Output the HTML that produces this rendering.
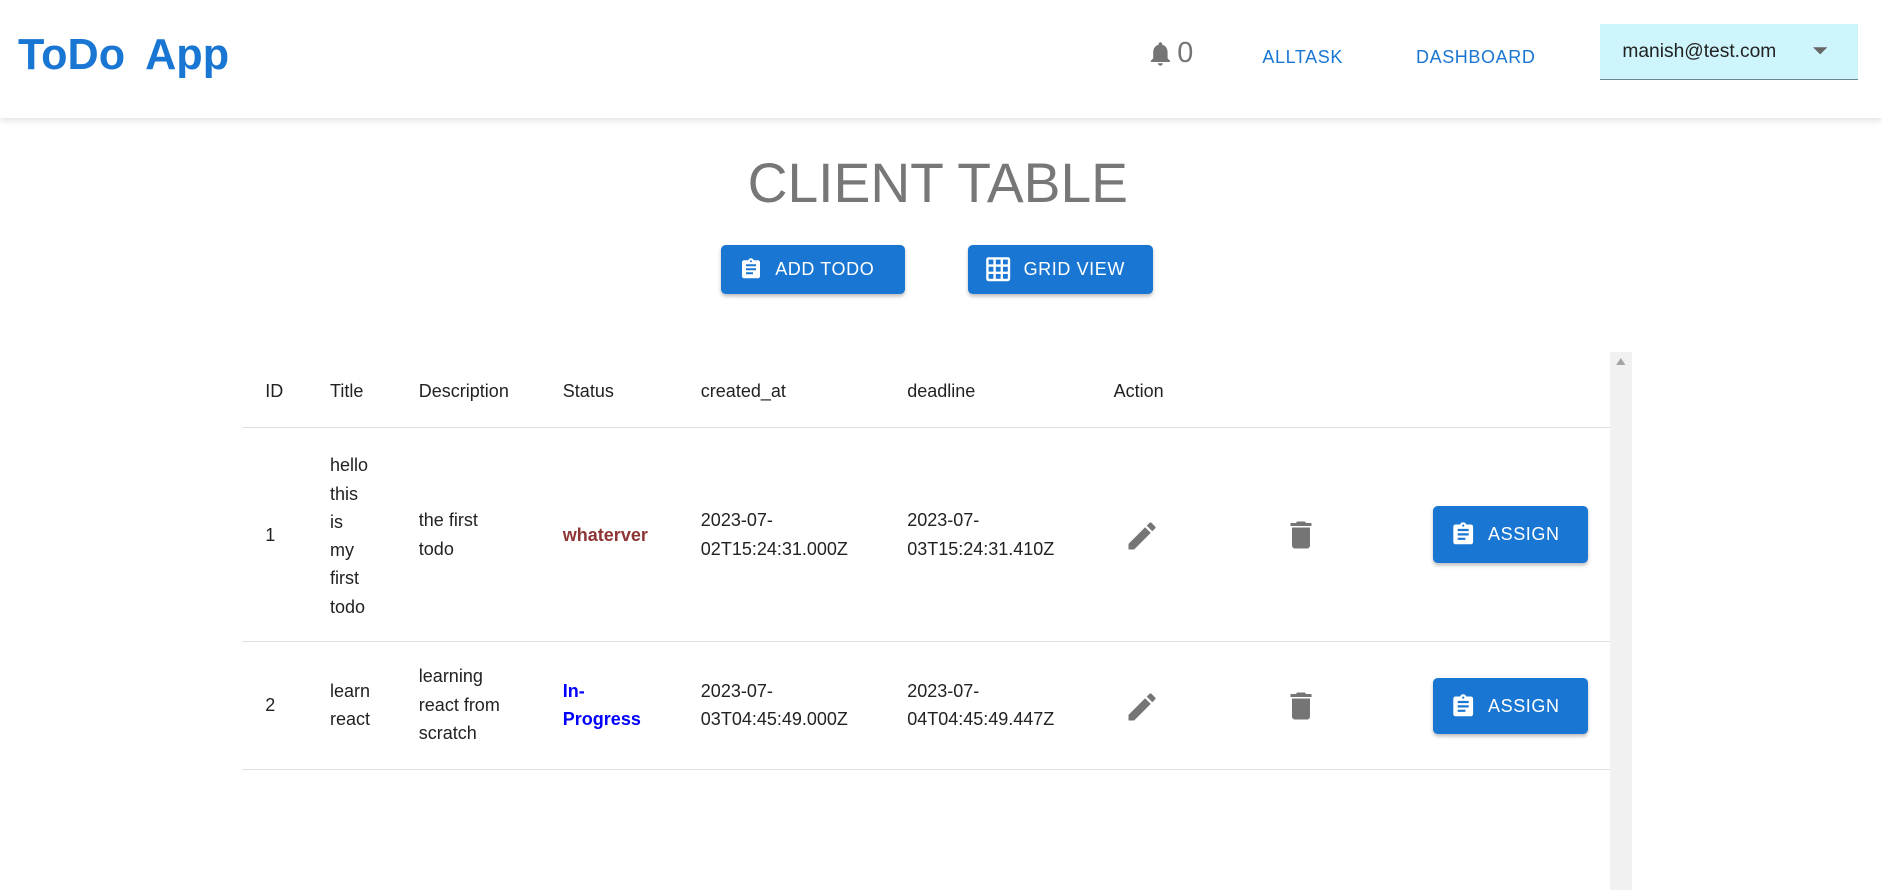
<!DOCTYPE html>
<html><head><meta charset="utf-8">
<style>
html,body{margin:0;padding:0;width:1882px;height:890px;overflow:hidden;background:#fff;}
#w{zoom:1.2;width:1568px;height:742px;position:relative;font-family:"Liberation Sans",sans-serif;}
.a{position:absolute;}
header{position:absolute;left:0;top:0;width:1568px;height:98px;background:#fff;box-shadow:0 2px 6px rgba(0,0,0,0.12);}
.logo{left:15px;top:26px;font-size:36px;font-weight:bold;color:#1976d2;letter-spacing:0px;word-spacing:8px;}
.nav{font-size:15px;color:#1976d2;letter-spacing:0.5px;top:39px;}
.user{left:1333px;top:20px;width:215px;height:46px;background:#cdf5fb;border-bottom:1px solid #6a8a8f;font-size:16px;color:#222;}
h1{position:absolute;margin:0;left:0;width:1563px;text-align:center;top:126px;font-size:46px;font-weight:normal;color:#777;}
.btn{background:#1976d2;color:#fff;border-radius:4px;box-shadow:0 2px 3px rgba(0,0,0,0.25);font-size:15px;letter-spacing:0.5px;display:flex;align-items:center;}
.btn svg{margin-right:10px;}
.t{font-size:15px;color:#222;line-height:23.6px;}
.line{position:absolute;left:202px;width:1140px;height:1px;background:#e0e0e0;}
</style></head><body><div id="w">
<header>
<div class="a logo">ToDo App</div>
<svg class="a" style="left:955px;top:32px" width="24" height="26" viewBox="0 0 24 24"><path fill="#757575" d="M12 22c1.1 0 2-.9 2-2h-4c0 1.1.9 2 2 2zm6-6v-5c0-3.070-1.63-5.64-4.5-6.32V4c0-.83-.67-1.5-1.5-1.5s-1.5.67-1.5 1.5v.68C7.640 5.36 6 7.92 6 11v5l-2 2v1h16v-1l-2-2z"/></svg>
<div class="a" style="left:981px;top:31px;font-size:24px;color:#757575">0</div>
<div class="a nav" style="left:1052px">ALLTASK</div>
<div class="a nav" style="left:1180px">DASHBOARD</div>
<div class="a user"><span class="a" style="left:19px;top:14px">manish@test.com</span><svg class="a" style="left:178px;top:18px" width="12" height="8" viewBox="0 0 10 5"><path fill="#666" d="M0 0l5 5 5-5z"/></svg></div>
</header>
<h1>CLIENT TABLE</h1>
<div class="a btn" style="left:601px;top:204px;width:153px;height:41px;"><svg style="margin-left:15px" width="20" height="22" viewBox="0 0 24 24"><path fill="#fff" d="M19 3h-4.18C14.4 1.84 13.3 1 12 1s-2.4.84-2.82 2H5c-1.1 0-2 .9-2 2v14c0 1.1.9 2 2 2h14c1.1 0 2-.9 2-2V5c0-1.1-.9-2-2-2zm-7 0c.55 0 1 .45 1 1s-.45 1-1 1-1-.45-1-1 .45-1 1-1zm2 14H7v-2h7v2zm3-4H7v-2h10v2zm0-4H7V7h10v2z"/></svg>ADD TODO</div>
<div class="a btn" style="left:807px;top:204px;width:154px;height:41px;"><svg style="margin-left:14px" width="22" height="22" viewBox="0 0 22 22"><g fill="none" stroke="#fff" stroke-width="2"><rect x="2" y="2" width="18" height="18" rx="1"/><path d="M8 2v18M14 2v18M2 8h18M2 14h18"/></g></svg>GRID VIEW</div>

<div class="a" style="left:1342px;top:293px;width:18px;height:449px;background:#f1f1f1"></div>
<svg class="a" style="left:1347px;top:298px" width="8" height="6" viewBox="0 0 8 6"><path fill="#a3a3a3" d="M0 6L4 0 8 6z"/></svg>

<div class="a t" style="left:221px;top:314px">ID</div>
<div class="a t" style="left:275px;top:314px">Title</div>
<div class="a t" style="left:349px;top:314px">Description</div>
<div class="a t" style="left:469px;top:314px">Status</div>
<div class="a t" style="left:584px;top:314px">created_at</div>
<div class="a t" style="left:756px;top:314px">deadline</div>
<div class="a t" style="left:928px;top:314px">Action</div>
<div class="line" style="top:356px"></div>

<div class="a t" style="left:221px;top:434px">1</div>
<div class="a t" style="left:275px;top:376px">hello<br>this<br>is<br>my<br>first<br>todo</div>
<div class="a t" style="left:349px;top:422px">the first<br>todo</div>
<div class="a t" style="left:469px;top:434px;font-weight:bold;color:#8e3535">whaterver</div>
<div class="a t" style="left:584px;top:422px">2023-07-<br>02T15:24:31.000Z</div>
<div class="a t" style="left:756px;top:422px">2023-07-<br>03T15:24:31.410Z</div>
<div class="line" style="top:534px"></div>

<div class="a t" style="left:221px;top:576px">2</div>
<div class="a t" style="left:275px;top:564px">learn<br>react</div>
<div class="a t" style="left:349px;top:552px">learning<br>react from<br>scratch</div>
<div class="a t" style="left:469px;top:564px;font-weight:bold;color:#0000ff">In-<br>Progress</div>
<div class="a t" style="left:584px;top:564px">2023-07-<br>03T04:45:49.000Z</div>
<div class="a t" style="left:756px;top:564px">2023-07-<br>04T04:45:49.447Z</div>
<div class="line" style="top:641px"></div>

<svg class="a" style="left:937px;top:432px" width="30" height="30" viewBox="0 0 24 24"><path fill="#757575" d="M3 17.25V21h3.75L17.81 9.94l-3.75-3.75L3 17.250zM20.71 7.04a1 1 0 000-1.41l-2.34-2.34a1 1 0 00-1.41 0l-1.83 1.83 3.75 3.75 1.83-1.83z"/></svg>
<svg class="a" style="left:1069px;top:431px" width="30" height="30" viewBox="0 0 24 24"><path fill="#757575" d="M6 19c0 1.1.9 2 2 2h8c1.1 0 2-.9 2-2V7H6v12zM19 4h-3.5l-1-1h-5l-1 1H5v2h14V4z"/></svg>
<svg class="a" style="left:937px;top:574px" width="30" height="30" viewBox="0 0 24 24"><path fill="#757575" d="M3 17.25V21h3.75L17.81 9.94l-3.75-3.75L3 17.25zM20.71 7.04a1 1 0 000-1.41l-2.34-2.34a1 1 0 00-1.41 0l-1.83 1.83 3.75 3.75 1.83-1.83z"/></svg>
<svg class="a" style="left:1069px;top:573px" width="30" height="30" viewBox="0 0 24 24"><path fill="#757575" d="M6 19c0 1.1.9 2 2 2h8c1.1 0 2-.9 2-2V7H6v12zM19 4h-3.5l-1-1h-5l-1 1H5v2h14V4z"/></svg>

<div class="a btn" style="left:1194px;top:422px;width:129px;height:47px;"><svg style="margin-left:14px" width="22" height="24" viewBox="0 0 24 24"><path fill="#fff" d="M19 3h-4.18C14.4 1.84 13.3 1 12 1s-2.4.84-2.82 2H5c-1.1 0-2 .9-2 2v14c0 1.1.9 2 2 2h14c1.1 0 2-.9 2-2V5c0-1.1-.9-2-2-2zm-7 0c.55 0 1 .45 1 1s-.45 1-1 1-1-.45-1-1 .45-1 1-1zm2 14H7v-2h7v2zm3-4H7v-2h10v2zm0-4H7V7h10v2z"/></svg>ASSIGN</div>
<div class="a btn" style="left:1194px;top:565px;width:129px;height:47px;"><svg style="margin-left:14px" width="22" height="24" viewBox="0 0 24 24"><path fill="#fff" d="M19 3h-4.18C14.4 1.84 13.3 1 12 1s-2.4.84-2.82 2H5c-1.1 0-2 .9-2 2v14c0 1.1.9 2 2 2h14c1.1 0 2-.9 2-2V5c0-1.1-.9-2-2-2zm-7 0c.55 0 1 .45 1 1s-.45 1-1 1-1-.45-1-1 .45-1 1-1zm2 14H7v-2h7v2zm3-4H7v-2h10v2zm0-4H7V7h10v2z"/></svg>ASSIGN</div>
</div></body></html>
